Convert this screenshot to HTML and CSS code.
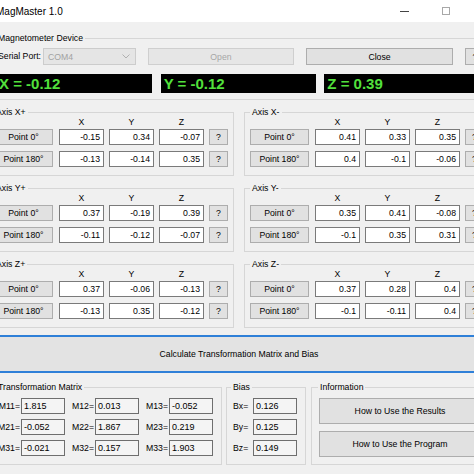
FILE: index.html
```html
<!DOCTYPE html>
<html>
<head>
<meta charset="utf-8">
<link rel="stylesheet" href="styles.css">
</head>
<body>
<div class="titlebar">
  <span class="title">MagMaster 1.0</span>
  <div class="winctl">
    <span class="wc"><span class="min"></span></span>
    <span class="wc"><span class="max"></span></span>
    <span class="wc"><svg width="10" height="10" viewBox="0 0 10 10"><path d="M0 0L10 10M10 0L0 10" stroke="#333" stroke-width="1"/></svg></span>
  </div>
</div>
<div class="client">
  <fieldset class="grp dev">
    <legend>Magnetometer Device</legend>
    <div class="serial">
      <span class="lbl">Serial Port:</span>
      <div class="combo"><span>COM4</span><svg width="8" height="5" viewBox="0 0 8 5"><path d="M0.5 0.5L4 4L7.5 0.5" fill="none" stroke="#b0b0b0" stroke-width="1"/></svg></div>
      <button class="btn open" disabled>Open</button>
      <button class="btn close">Close</button>
      <button class="btn help">?</button>
    </div>
    <div class="displays">
      <div class="disp">X = -0.12</div>
      <div class="disp">Y = -0.12</div>
      <div class="disp">Z = 0.39</div>
    </div>
  </fieldset>

  <div class="axes">
    <fieldset class="grp axis">
      <legend>Axis X+</legend>
      <div class="agrid">
        <span></span><span class="hd">X</span><span class="hd">Y</span><span class="hd">Z</span><span></span>
        <button class="btn pt">Point 0°</button><div class="tb">-0.15</div><div class="tb">0.34</div><div class="tb">-0.07</div><button class="btn q">?</button>
        <button class="btn pt">Point 180°</button><div class="tb">-0.13</div><div class="tb">-0.14</div><div class="tb">0.35</div><button class="btn q">?</button>
      </div>
    </fieldset>
    <fieldset class="grp axis">
      <legend>Axis X-</legend>
      <div class="agrid">
        <span></span><span class="hd">X</span><span class="hd">Y</span><span class="hd">Z</span><span></span>
        <button class="btn pt">Point 0°</button><div class="tb">0.41</div><div class="tb">0.33</div><div class="tb">0.35</div><button class="btn q">?</button>
        <button class="btn pt">Point 180°</button><div class="tb">0.4</div><div class="tb">-0.1</div><div class="tb">-0.06</div><button class="btn q">?</button>
      </div>
    </fieldset>
    <fieldset class="grp axis">
      <legend>Axis Y+</legend>
      <div class="agrid">
        <span></span><span class="hd">X</span><span class="hd">Y</span><span class="hd">Z</span><span></span>
        <button class="btn pt">Point 0°</button><div class="tb">0.37</div><div class="tb">-0.19</div><div class="tb">0.39</div><button class="btn q">?</button>
        <button class="btn pt">Point 180°</button><div class="tb">-0.11</div><div class="tb">-0.12</div><div class="tb">-0.07</div><button class="btn q">?</button>
      </div>
    </fieldset>
    <fieldset class="grp axis">
      <legend>Axis Y-</legend>
      <div class="agrid">
        <span></span><span class="hd">X</span><span class="hd">Y</span><span class="hd">Z</span><span></span>
        <button class="btn pt">Point 0°</button><div class="tb">0.35</div><div class="tb">0.41</div><div class="tb">-0.08</div><button class="btn q">?</button>
        <button class="btn pt">Point 180°</button><div class="tb">-0.1</div><div class="tb">0.35</div><div class="tb">0.31</div><button class="btn q">?</button>
      </div>
    </fieldset>
    <fieldset class="grp axis">
      <legend>Axis Z+</legend>
      <div class="agrid">
        <span></span><span class="hd">X</span><span class="hd">Y</span><span class="hd">Z</span><span></span>
        <button class="btn pt">Point 0°</button><div class="tb">0.37</div><div class="tb">-0.06</div><div class="tb">-0.13</div><button class="btn q">?</button>
        <button class="btn pt">Point 180°</button><div class="tb">-0.13</div><div class="tb">0.35</div><div class="tb">-0.12</div><button class="btn q">?</button>
      </div>
    </fieldset>
    <fieldset class="grp axis">
      <legend>Axis Z-</legend>
      <div class="agrid">
        <span></span><span class="hd">X</span><span class="hd">Y</span><span class="hd">Z</span><span></span>
        <button class="btn pt">Point 0°</button><div class="tb">0.37</div><div class="tb">0.28</div><div class="tb">0.4</div><button class="btn q">?</button>
        <button class="btn pt">Point 180°</button><div class="tb">-0.1</div><div class="tb">-0.11</div><div class="tb">0.4</div><button class="btn q">?</button>
      </div>
    </fieldset>
  </div>

  <button class="calc">Calculate Transformation Matrix and Bias</button>

  <div class="bottom">
    <fieldset class="grp matrix">
      <legend>Transformation Matrix</legend>
      <div class="mrow">
        <span class="ml">M11=</span><div class="mb">1.815</div>
        <span class="ml">M12=</span><div class="mb">0.013</div>
        <span class="ml">M13=</span><div class="mb">-0.052</div>
      </div>
      <div class="mrow">
        <span class="ml">M21=</span><div class="mb">-0.052</div>
        <span class="ml">M22=</span><div class="mb">1.867</div>
        <span class="ml">M23=</span><div class="mb">0.219</div>
      </div>
      <div class="mrow">
        <span class="ml">M31=</span><div class="mb">-0.021</div>
        <span class="ml">M32=</span><div class="mb">0.157</div>
        <span class="ml">M33=</span><div class="mb">1.903</div>
      </div>
    </fieldset>
    <fieldset class="grp bias">
      <legend>Bias</legend>
      <div class="mrow"><span class="bl">Bx=</span><div class="mb">0.126</div></div>
      <div class="mrow"><span class="bl">By=</span><div class="mb">0.125</div></div>
      <div class="mrow"><span class="bl">Bz=</span><div class="mb">0.149</div></div>
    </fieldset>
    <fieldset class="grp info">
      <legend>Information</legend>
      <button class="btn ib">How to Use the Results</button>
      <button class="btn ib">How to Use the Program</button>
    </fieldset>
  </div>
</div>
</body>
</html>
```

FILE: styles.css
```css
* { box-sizing: border-box; }
html, body { margin: 0; padding: 0; }
body {
  width: 474px;
  height: 474px;
  overflow: hidden;
  background: #f0f0f0;
  font-family: "Liberation Sans", Arial, sans-serif;
  font-size: 8.7px;
  color: #000;
}
.titlebar {
  display: flex;
  align-items: center;
  width: 511px;
  height: 22px;
  margin-left: -4px;
  background: #fff;
}
.title { flex: 1; font-size: 10px; }
.winctl { display: flex; height: 22px; }
.wc { width: 41px; display: flex; align-items: center; justify-content: center; }
.min { width: 9px; height: 1px; background: #444; }
.max { width: 8px; height: 8px; border: 1px solid #a8a8a8; }

.client { margin-left: -12px; width: 502px; }

.grp {
  margin: 0;
  padding: 0;
  border: 1px solid #d6d6d6;
  min-width: 0;
}
.grp legend {
  padding: 0 2px;
  margin-left: 7px;
  height: 10px;
  line-height: 10px;
  font-size: 8.7px;
}

.btn {
  font-family: "Liberation Sans", Arial, sans-serif;
  font-size: 8.7px;
  color: #000;
  background: #e1e1e1;
  border: 1px solid #adadad;
  padding: 0;
  margin: 0;
}

/* device group */
.dev { margin-top: 11px; padding: 5px 0 6px 0; }
.serial { display: flex; height: 17px; padding-left: 9px; }
.serial .lbl { width: 45px; line-height: 17px; white-space: nowrap; }
.combo {
  width: 93px;
  display: flex;
  align-items: center;
  justify-content: space-between;
  padding: 0 5px 0 4px;
  background: #e5e5e5;
  border: 1px solid #cccccc;
  color: #a2a2a2;
}
.open { width: 146px; margin-left: 12px; background: #e6e6e6; border-color: #cfcfcf; color: #a6a6a6; }
.close { width: 147px; margin-left: 12px; }
.help { width: 20px; margin-left: 12px; }

.displays { display: flex; margin-top: 9px; padding-left: 7px; }
.disp {
  width: 156px;
  height: 19px;
  margin-right: 9px;
  padding-left: 3px;
  background: #000;
  color: #52e03c;
  font-size: 15px;
  font-weight: bold;
  line-height: 19px;
  white-space: nowrap;
}
.disp:nth-child(2) { margin-right: 8px; }

/* axes */
.axes {
  display: grid;
  grid-template-columns: 246px 246px;
  column-gap: 10px;
  row-gap: 7px;
  margin-top: 7px;
}
.axis { padding: 0 0 8px 5px; }
.axis legend { margin-left: 0; }
.agrid {
  display: grid;
  grid-template-columns: 60px 45px 45px 45px 19px;
  grid-template-rows: 10px 18px 22px;
  column-gap: 5px;
  align-items: end;
}
.hd { text-align: center; line-height: 10px; }
.pt { width: 59px; height: 16px; }
.q { width: 19px; height: 16px; }
.tb {
  height: 16px;
  background: #fff;
  border: 1px solid #7a7a7a;
  text-align: right;
  padding-right: 3px;
  line-height: 14px;
}

/* calculate */
.calc {
  display: block;
  width: 502px;
  height: 38px;
  margin: 7px 0 0 0;
  padding: 0;
  background: #e3e3e3;
  border: none;
  border-top: 2px solid #2f80d8;
  border-bottom: 2px solid #2f80d8;
  font-family: "Liberation Sans", Arial, sans-serif;
  font-size: 8.7px;
  color: #000;
}

/* bottom */
.bottom { display: flex; align-items: stretch; margin-top: 9px; }
.matrix { width: 234px; padding: 6px 0 8px 7px; }
.matrix legend { margin-left: 0; }
.mrow { display: flex; height: 16px; margin-bottom: 5px; }
.mrow:last-child { margin-bottom: 0; }
.ml { width: 25px; text-align: right; padding-right: 1px; line-height: 16px; white-space: nowrap; }
.mb {
  width: 44px;
  height: 16px;
  margin-right: 5px;
  background: #f4f4f4;
  border: 1px solid #6e6e6e;
  padding-left: 2px;
  line-height: 14px;
  font-size: 9px;
}
.bias { width: 80px; margin-left: 4px; padding: 6px 0 8px 6px; }
.bias legend { margin-left: -2px; }
.bl { width: 20px; line-height: 16px; white-space: nowrap; }
.info { flex: 1; margin-left: 5px; padding: 6px 0 7px 7px; }
.info legend { margin-left: -1px; }
.ib { display: block; width: 162px; height: 26px; }
.ib + .ib { margin-top: 7px; }
```
